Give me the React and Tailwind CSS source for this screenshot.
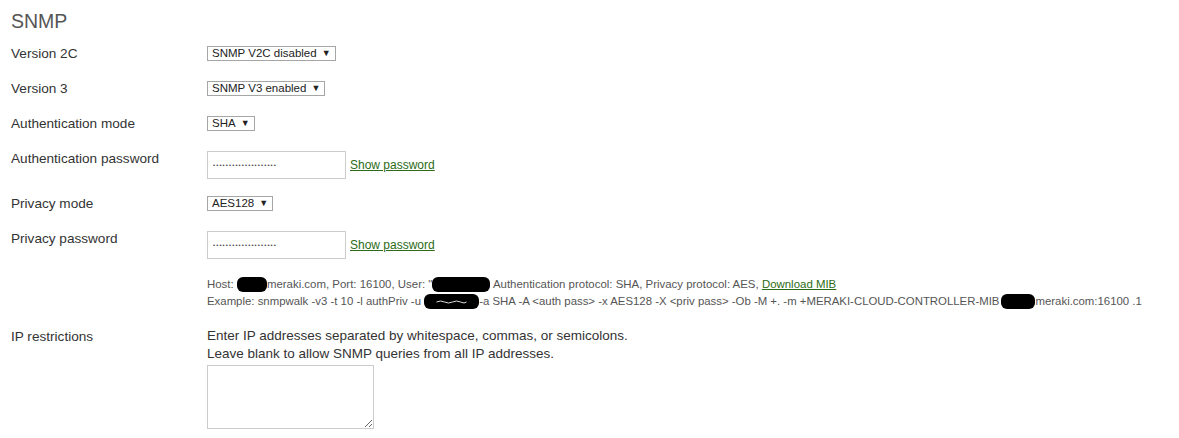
import React from 'react';

const Select = ({ label }) => (
  <span className="inline-flex h-[15px] items-center border border-[#a6a6a6] bg-white pl-[4px] pr-[4px] text-[11.5px] leading-none text-[#222]">
    {label}
    <span className="ml-[5px] text-[9px]">▼</span>
  </span>
);

const Redact = ({ w, squiggle, className = '' }) => (
  <span
    className={`relative inline-block h-[15px] rounded-[6px] bg-black align-[-4px] ${className}`}
    style={{ width: w }}
  >
    {squiggle && (
      <svg className="absolute left-[12px] top-[6px]" width={w - 24} height="4" viewBox="0 0 30 4">
        <path d="M0 2 Q4 0 8 2 T16 2 T24 2 T30 2" stroke="#ddd" strokeWidth="1" fill="none" />
      </svg>
    )}
  </span>
);

const PasswordField = () => (
  <div className="flex items-center">
    <input
      type="text"
      readOnly
      defaultValue="••••••••••••••••••••"
      className="h-[28px] w-[139px] border border-[#cccccc] bg-white px-[5px] text-[6px] tracking-[1.1px] text-[#444] outline-none"
    />
    <a href="#" className="ml-[4px] text-[12px] text-[#2d6b16] underline">Show password</a>
  </div>
);

const Row = ({ label, children, className = '' }) => (
  <div className={`flex items-start ${className}`}>
    <div className="w-[196px] shrink-0 text-[13.6px] leading-[15px] text-[#333]">{label}</div>
    <div className="flex">{children}</div>
  </div>
);

export default function App() {
  return (
    <div className="min-h-[438px] bg-white px-[11px] pt-[9px]" style={{ fontFamily: '"Liberation Sans", Arial, sans-serif' }}>
      <h2 className="text-[19.5px] font-light leading-[24px] text-[#555]">SNMP</h2>

      <div className="mt-[13px] flex flex-col">
        <Row label="Version 2C" className="mb-[20px]">
          <Select label="SNMP V2C disabled" />
        </Row>
        <Row label="Version 3" className="mb-[20px]">
          <Select label="SNMP V3 enabled" />
        </Row>
        <Row label="Authentication mode" className="mb-[20px]">
          <Select label="SHA" />
        </Row>
        <Row label="Authentication password" className="mb-[17px]">
          <PasswordField />
        </Row>
        <Row label="Privacy mode" className="mb-[20px]">
          <Select label="AES128" />
        </Row>
        <Row label="Privacy password" className="mb-[17px]">
          <PasswordField />
        </Row>

        <div className="ml-[196px] leading-[17px] text-[#555]">
          <div className="text-[11.45px]">
            Host: <Redact w={30} />meraki.com, Port: 16100, User: "<Redact w={58} /> Authentication protocol: SHA, Privacy protocol: AES,{' '}
            <a href="#" className="text-[#2d6b16] underline">Download MIB</a>
          </div>
          <div className="text-[11.4px]">
            Example: snmpwalk -v3 -t 10 -l authPriv -u <Redact w={55} squiggle />-a SHA -A &lt;auth pass&gt; -x AES128 -X &lt;priv pass&gt; -Ob -M +. -m +MERAKI-CLOUD-CONTROLLER-MIB<Redact w={34} className="ml-[2px]" />meraki.com:16100 .1
          </div>
        </div>

        <Row label="IP restrictions" className="mt-[19px]">
          <div className="-mt-[2px] text-[13.5px] leading-[18px] text-[#333]">
            <p>Enter IP addresses separated by whitespace, commas, or semicolons.</p>
            <p>Leave blank to allow SNMP queries from all IP addresses.</p>
            <textarea className="mt-[2px] block h-[64px] w-[167px] border border-[#cccccc] bg-white outline-none" />
          </div>
        </Row>
      </div>
    </div>
  );
}
